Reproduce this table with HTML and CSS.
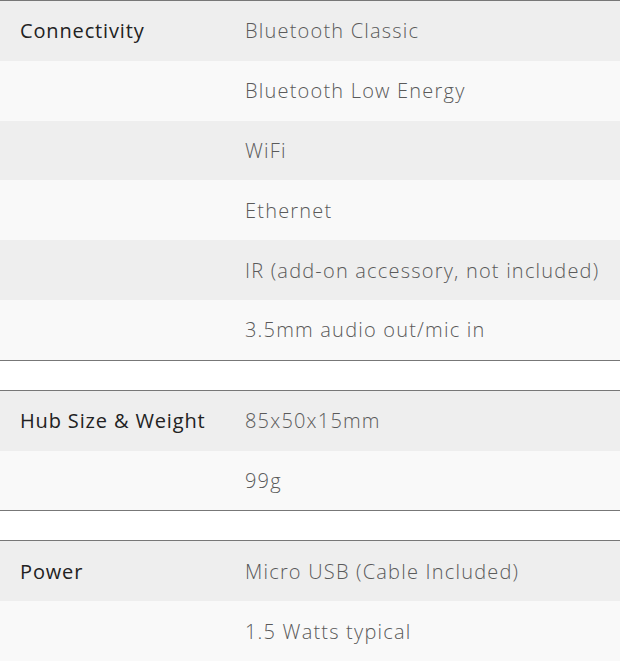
FILE: index.html
```html
<!DOCTYPE html>
<html>
<head>
<meta charset="utf-8">
<link rel="stylesheet" href="styles.css">
</head>
<body>
<div class="specs">
  <div class="group">
    <div class="row odd"><div class="label">Connectivity</div><div class="value">Bluetooth Classic</div></div>
    <div class="row even"><div class="label"></div><div class="value">Bluetooth Low Energy</div></div>
    <div class="row odd"><div class="label"></div><div class="value">WiFi</div></div>
    <div class="row even"><div class="label"></div><div class="value">Ethernet</div></div>
    <div class="row odd"><div class="label"></div><div class="value">IR (add-on accessory, not included)</div></div>
    <div class="row even"><div class="label"></div><div class="value">3.5mm audio out/mic in</div></div>
  </div>
  <div class="group">
    <div class="row odd"><div class="label">Hub Size &amp; Weight</div><div class="value">85x50x15mm</div></div>
    <div class="row even"><div class="label"></div><div class="value">99g</div></div>
  </div>
  <div class="group">
    <div class="row odd"><div class="label">Power</div><div class="value">Micro USB (Cable Included)</div></div>
    <div class="row even"><div class="label"></div><div class="value">1.5 Watts typical</div></div>
  </div>
</div>
</body>
</html>
```
FILE: styles.css
```css
html, body {
  margin: 0;
  padding: 0;
  background: #ffffff;
}
.specs {
  display: flex;
  flex-direction: column;
  gap: 29px;
  font-family: "Open Sans", "Liberation Sans", sans-serif;
}
.group {
  border-top: 1px solid #777777;
  border-bottom: 1px solid #777777;
}
.row {
  display: grid;
  grid-template-columns: 245px 1fr;
  height: 59.8px;
  align-items: center;
  font-size: 20px;
}
.row.odd { background: #eeeeee; }
.row.even { background: #f9f9f9; }
.label {
  padding-left: 20px;
  color: #222222;
  font-weight: 400;
  letter-spacing: 0.85px;
}
.value {
  color: #5a5a5a;
  font-weight: 300;
  letter-spacing: 1.2px;
  white-space: nowrap;
}
```
